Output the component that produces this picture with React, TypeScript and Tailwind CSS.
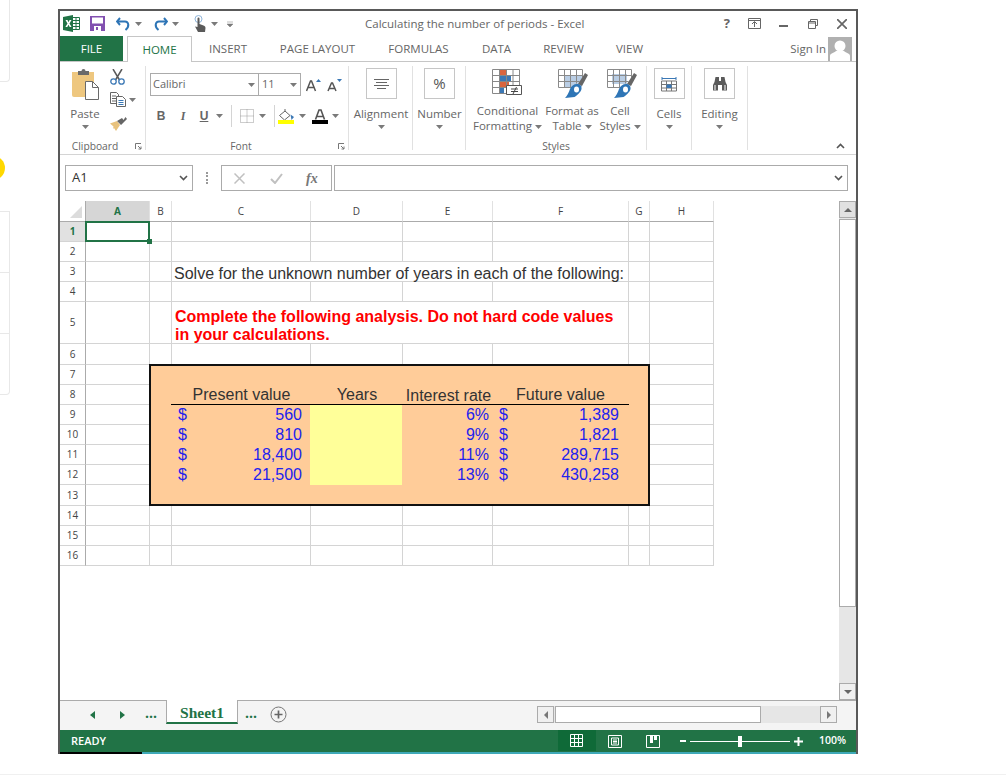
import type { ReactNode } from 'react'

const Caret = ({ className = '' }: { className?: string }) => (
    <svg width="7" height="4" viewBox="0 0 7 4" className={className}>
        <path d="M0 0h7L3.500 4z" fill="#7a7a7a" />
    </svg>
)

const ExcelLogo = () => (
    <svg width="17" height="17" viewBox="0 0 17 17">
        <path d="M0 2 10 0v17L0 15z" fill="#217346" />
        <path d="M2.500 5h2l1 2.300L6.600 5h1.900L6.500 8.500 8.600 12H6.700L5.500 9.700 4.300 12H2.400l2.100-3.500z" fill="#fff" />
        <path d="M10 2.500h6.500v12H10" fill="#fff" stroke="#217346" />
        <path d="M10 5.500h6.500M10 8.500h6.500M10 11.500h6.500M13 2.500v12" stroke="#217346" fill="none" />
    </svg>
)

const SaveIcon = () => (
    <svg width="15" height="15" viewBox="0 0 15 15">
        <path d="M0 0h15v15H0z" fill="#8250b0" />
        <path d="M2 1.500h11v6H2z" fill="#fff" />
        <path d="M4 10h7v5H4z" fill="#fff" />
        <path d="M6 11h2v3H6z" fill="#8250b0" />
    </svg>
)

const UndoIcon = ({ flip = false }: { flip?: boolean }) => (
    <svg width="15" height="14" viewBox="0 0 15 14" className={flip ? '-scale-x-100' : ''}>
        <path d="M4 1 1 4.500 4 8" stroke="#2e75b6" strokeWidth="2" fill="none" />
        <path d="M1.500 4.500H9c3.500 0 5 5 .5 8.500" stroke="#2e75b6" strokeWidth="2" fill="none" />
    </svg>
)

const TouchIcon = () => (
    <svg width="13" height="17" viewBox="0 0 13 17">
        <circle cx="4.500" cy="4" r="3.500" fill="none" stroke="#8fb4d9" />
        <path d="M3.500 3.500a1 1 0 0 1 2 0V9l4 1.500c1.500.5 2 1.500 2 2.500L11 17H4L1 11.500 3.500 12z" fill="#5a5a5a" />
    </svg>
)

const PasteIcon = () => (
    <svg width="29" height="31" viewBox="0 0 29 31">
        <path d="M1 3h22v25H3a2 2 0 0 1-2-2z" fill="#eec77f" />
        <path d="M7 2h3.500a2 2 0 0 1 4 0H18v4H7z" fill="#6a6a6a" />
        <path d="M14.500 12.500h7l6 6v12h-13z" fill="#fff" stroke="#6a6a6a" />
        <path d="M21.500 12.500v6h6" fill="none" stroke="#6a6a6a" />
    </svg>
)

const ScissorsIcon = () => (
    <svg width="15" height="16" viewBox="0 0 15 16">
        <path d="M3 0l6.500 11M12 0 5.500 11" stroke="#5a5a5a" strokeWidth="1.500" fill="none" />
        <circle cx="3.500" cy="12.500" r="2.700" fill="none" stroke="#3b78b5" strokeWidth="1.300" />
        <circle cx="11.500" cy="12.500" r="2.700" fill="none" stroke="#3b78b5" strokeWidth="1.300" />
    </svg>
)

const CopyIcon = () => (
    <svg width="16" height="15" viewBox="0 0 16 15">
        <path d="M.500.500h6l2 2v9h-8z" fill="#fff" stroke="#666" />
        <path d="M2 4h4M2 6.500h4M2 9h4" stroke="#666" />
        <path d="M6.500 4.500h6l3 3v7h-9z" fill="#fff" stroke="#666" />
        <path d="M8.500 8.500h5M8.500 10.500h5M8.500 12.500h5" stroke="#3b78b5" />
    </svg>
)

const BrushIcon = () => (
    <svg width="17" height="15" viewBox="0 0 17 15">
        <path d="M0 7.500 7 5l3 4-4 6-2-3-1 1 .5-2.500z" fill="#e8c27d" />
        <path d="M7 5l5-3 1.500 2 2-3 1.500 2-2.500 2.500L11 9z" fill="#666" />
    </svg>
)

const BordersIcon = () => (
    <svg width="14" height="14" viewBox="0 0 14 14">
        <path d="M.500.500h13v13H.500zM7 .500v13M.500 7h13" fill="none" stroke="#9a9a9a" strokeDasharray="1 1" />
    </svg>
)

const FillIcon = () => (
    <svg width="17" height="15" viewBox="0 0 17 15">
        <path d="M7 2 1.500 6.500 6.500 11 12 6.500z" fill="#fff" stroke="#666" />
        <path d="M7 0v3" stroke="#666" />
        <path d="M12.500 5.500 16 8l-2.500 3z" fill="#3b78b5" />
        <path d="M0 11h16v4H0z" fill="#ffff00" />
    </svg>
)

const FontColorIcon = () => (
    <svg width="16" height="15" viewBox="0 0 16 15">
        <path d="M3.500 10.500 7 1h2l3.500 9.500M5 7.500h6" fill="none" stroke="#555" strokeWidth="1.600" />
        <path d="M0 11h16v4H0z" fill="#000" />
    </svg>
)

const GrowFont = ({ shrink = false }: { shrink?: boolean }) => (
    <svg width="15" height="14" viewBox="0 0 15 14">
        <path d={shrink ? 'M1 13 4.500 5h1L9 13M2.500 10.500h5' : 'M.500 13 4.500 3h1l4 10M2 9.500h6'} fill="none" stroke="#555" strokeWidth="1.500" />
        <path d={shrink ? 'M10 1h5l-2.500 3z' : 'M10 4l2.500-3L15 4z'} fill="#3b78b5" />
    </svg>
)

const AlignIcon = () => (
    <svg width="15" height="10" viewBox="0 0 15 10">
        <path d="M0 .500h15M2 3.500h11M0 6.500h15M3 9.500h9" stroke="#666" />
    </svg>
)

const ConditionalIcon = () => (
    <svg width="31" height="31" viewBox="0 0 31 31">
        <path d="M8 1h6v5H8zM8 13h9v5H8z" fill="#d9653f" />
        <path d="M8 7h11v5H8zM8 19h4v5H8z" fill="#3b78b5" />
        <path d="M.500.500h27v18M.500.500v24h14M.500 6.500h27M.500 12.500h27M.500 18.500h14M7.500.500v24M14.500.500v18M21 .500v18" fill="none" stroke="#888" />
        <path d="M14.500 16.500h15v9h-15z" fill="#fff" stroke="#555" />
        <path d="M19 20h7M19 22.500h7M24.500 18l-3.500 7" stroke="#444" fill="none" />
    </svg>
)

const TableBrushIcon = ({ wide = false }: { wide?: boolean }) => (
    <svg width="31" height="31" viewBox="0 0 31 31">
        {wide ? (
            <path d="M5 5h15v10H5z" fill="#b9cde4" />
        ) : (
            <path d="M6 6h18v12H6z" fill="#b9cde4" />
        )}
        <path d="M.500.500h24v8M.500.500v18h15M.500 6.500h24M.500 12.500h21M6.500.500v18M12.500.500v18M18.500.500v14" fill="none" stroke="#8a8a8a" />
        <path d="M20 15 27 4l3 2-6 11z" fill="#666" />
        <path d="M19 15c3 0 5 2 4.500 5-.5 3-5 7-7 8L7 29c2-2 4-6 5-9 1-3 4-5 7-5z" fill="#2e75b6" />
        <ellipse cx="18.500" cy="20.500" rx="2.500" ry="3" fill="#fff" />
    </svg>
)

const CellsIcon = () => (
    <svg width="16" height="16" viewBox="0 0 16 16">
        <path d="M1 1v3M15 1v3M1 2.500h14" stroke="#3b78b5" fill="none" />
        <path d="M.500 5h15v10H.500zM.500 8.500h15M.500 12h15M5.500 5v10M10.500 5v10" fill="none" stroke="#777" />
        <path d="M5.500 8.500h5V12h-5z" fill="#3b78b5" />
    </svg>
)

const BinocularsIcon = () => (
    <svg width="16" height="14" viewBox="0 0 16 14">
        <path d="M3.500 0H7v4h2V0h3.500l1 5L15 8v5.500h-5V8H6v5.500H1V8l1.500-3z" fill="#5a5a5a" />
        <path d="M3 8v5M13 8v5" stroke="#fff" />
    </svg>
)

const Launcher = () => (
    <svg width="7" height="7" viewBox="0 0 7 7">
        <path d="M.500 6V.500H6M3 3l3 3M6 3.500V6H3.500" fill="none" stroke="#777" />
    </svg>
)

const Chevron = ({ up = false }: { up?: boolean }) => (
    <svg width="9" height="6" viewBox="0 0 9 6" className={up ? 'rotate-180' : ''}>
        <path d="M1 1l3.500 3.500L8 1" fill="none" stroke="#555" strokeWidth="1.600" />
    </svg>
)

function Group({ className, label, labelClass, launcher, children }: {
    className: string
    label: string
    labelClass?: string
    launcher?: boolean
    children: ReactNode
}) {
    return (
        <div className={`flex flex-col h-[84px] border-r border-[#e1e1e1] ${className}`}>
            <div className="flex-1">{children}</div>
            <div className="flex items-center h-4 -mb-1 text-[10.25px] leading-4 text-[#666]">
                <span className={`text-center ${labelClass ?? 'w-full'}`}>{label}</span>
                {launcher && <span className="ml-auto mr-[3px] flex"><Launcher /></span>}
            </div>
        </div>
    )
}

function BigButton({ label, children }: { label: string; children: ReactNode }) {
    return (
        <div className="flex flex-col items-center">
            <div className="w-[31px] h-[31px] border border-[#c6c6c6] flex items-center justify-center">{children}</div>
            <div className="mt-[7px] text-[11.5px] leading-4 text-[#666] whitespace-nowrap">{label}</div>
            <Caret className="mt-[3px]" />
        </div>
    )
}

const colHeads = [
    { name: 'A', cls: 'bg-[#d6d6d6] text-[#217346] font-bold' },
    { name: 'B', cls: '' },
    { name: 'C', cls: '' },
    { name: 'D', cls: '' },
    { name: 'E', cls: '' },
    { name: 'F', cls: '' },
    { name: 'G', cls: '' },
    { name: 'H', cls: '' },
]

const plainCell = 'border-r border-b border-[#d4d4d4]'
const rowHead = 'flex items-center justify-center text-[10px] text-[#444] border-r border-b border-r-[#ababab] border-b-[#d4d4d4]'

function SheetGrid() {
    const rows = Array.from({ length: 16 }, (_, i) => i + 1)
    return (
        <div className="grid w-fit grid-cols-[26px_64px_22px_139px_92px_90px_136px_21px_64px] grid-rows-[21px_20px_20px_20px_20px_42px_21px_20px_20px_20px_20px_20px_20px_21px_20px_20px_20px]">
            {/* header row */}
            <div className="flex items-end justify-end pr-[3px] pb-[3px] border-r border-b border-[#ababab]">
                <svg width="12" height="12" viewBox="0 0 12 12"><path d="M12 0v12H0z" fill="#dcdcdc" /></svg>
            </div>
            {colHeads.map(c => (
                <div key={c.name} className={`flex items-center justify-center text-[10px] text-[#444] border-b border-b-[#ababab] border-r border-r-[#e1e1e1] ${c.cls}`}>
                    {c.name}
                </div>
            ))}
            {rows.map(r => {
                const head = (
                    <div key={`h${r}`} className={`${rowHead} ${r === 1 ? 'bg-[#e1e1e1] text-[#217346] font-bold' : ''}`}>{r}</div>
                )
                if (r === 1) {
                    return [
                        head,
                        <div key="a1" className={`relative ${plainCell}`}>
                            <div className="absolute -left-px -top-px -right-px -bottom-px border-2 border-[#217346] z-10" />
                            <div className="absolute -right-[3px] -bottom-[3px] w-[5px] h-[5px] bg-[#217346] z-10" />
                        </div>,
                        ...colHeads.slice(1).map(c => <div key={`1${c.name}`} className={plainCell} />),
                    ]
                }
                if (r === 3) {
                    return [
                        head,
                        <div key="a3" className={plainCell} />,
                        <div key="b3" className={plainCell} />,
                        <div key="c3" className={`col-span-4 pl-[2px] pt-px text-[16px] leading-[21px] text-[#333] whitespace-nowrap font-['Liberation_Sans',Arial,sans-serif] ${plainCell}`}>
                            Solve for the unknown number of years in each of the following:
                        </div>,
                        <div key="g3" className={plainCell} />,
                        <div key="h3" className={plainCell} />,
                    ]
                }
                if (r === 5) {
                    return [
                        head,
                        <div key="a5" className={plainCell} />,
                        <div key="b5" className={plainCell} />,
                        <div key="c5" className={`col-span-4 pl-[3px] pr-2 pt-[6px] flex items-center text-[16px] leading-[18px] font-bold text-[#ff0000] font-['Liberation_Sans',Arial,sans-serif] ${plainCell}`}>
                            Complete the following analysis. Do not hard code values in your calculations.
                        </div>,
                        <div key="g5" className={plainCell} />,
                        <div key="h5" className={plainCell} />,
                    ]
                }
                if (r >= 7 && r <= 13) {
                    return [
                        head,
                        <div key={`a${r}`} className={plainCell} />,
                        <div key={`h${r}c`} className={`col-start-9 ${plainCell}`} />,
                    ]
                }
                return [head, ...colHeads.map(c => <div key={`${r}${c.name}`} className={plainCell} />)]
            })}
            <PeriodsBox />
        </div>
    )
}

const boxRows = [
    { pv: '560', rate: '6%', fv: '1,389' },
    { pv: '810', rate: '9%', fv: '1,821' },
    { pv: '18,400', rate: '11%', fv: '289,715' },
    { pv: '21,500', rate: '13%', fv: '430,258' },
]

function PeriodsBox() {
    return (
        <div className="col-start-3 col-span-6 row-start-8 row-span-7 -ml-px -mt-px border-2 border-[#111] bg-[#ffcc99] grid grid-cols-[20px_139px_92px_90px_137px_1fr] grid-rows-[19px_20px_20px_20px_20px_20px_1fr] text-[16px] leading-[20px] font-['Liberation_Sans',Arial,sans-serif]">
            <div className="col-span-6" />
            <div />
            <div className="col-span-4 grid grid-cols-[139px_92px_90px_137px] border-b border-black text-[#333]">
                <div className="text-center pl-[2px]">Present value</div>
                <div className="text-center pl-[2px]">Years</div>
                <div className="text-center whitespace-nowrap pt-px pl-[3px]">Interest rate</div>
                <div className="text-center">Future value</div>
            </div>
            <div />
            {boxRows.map(row => [
                <div key={`s${row.pv}`} />,
                <div key={`p${row.pv}`} className="flex justify-between pl-[7px] pr-[8px] text-[#2222ee]"><span>$</span><span>{row.pv}</span></div>,
                <div key={`y${row.pv}`} className="bg-[#ffff99]" />,
                <div key={`r${row.pv}`} className="text-right pr-[3px] text-[#2222ee]">{row.rate}</div>,
                <div key={`f${row.pv}`} className="flex justify-between pl-[7px] pr-[10px] text-[#2222ee]"><span>$</span><span>{row.fv}</span></div>,
                <div key={`e${row.pv}`} />,
            ])}
        </div>
    )
}

const tabs = [
    { name: 'INSERT', w: 'w-[72px]' },
    { name: 'PAGE LAYOUT', w: 'w-[107px]' },
    { name: 'FORMULAS', w: 'w-[95px]' },
    { name: 'DATA', w: 'w-[61px]' },
    { name: 'REVIEW', w: 'w-[73px]' },
    { name: 'VIEW', w: 'w-[59px]' },
]

export default function App() {
    return (
        <div className="w-[1006px] h-[781px] overflow-hidden bg-white flex flex-col font-['Open_Sans',sans-serif]">
            <div className="flex h-[774px] border-b border-[#f0f0f0] shrink-0 box-content">
                {/* page behind the window */}
                <div className="w-[58px] shrink-0 flex flex-col">
                    <div className="w-[10px] h-[82px] border-r border-b border-[#e8e8e8] rounded-br" />
                    <div className="w-6 h-6 rounded-full bg-[#ffd800] -ml-[19px] mt-[74px]" />
                    <div className="w-[10px] h-[184px] mt-[31px] border border-l-0 border-[#e8e8e8] rounded-br flex flex-col">
                        <div className="h-[61px] border-b border-[#e8e8e8]" />
                        <div className="h-[61px] border-b border-[#e8e8e8]" />
                    </div>
                </div>

                {/* excel window */}
                <div className="w-[800px] h-[745px] mt-[9px] border-2 border-b-0 border-[#595959] flex flex-col text-[#666]">
                    {/* title bar */}
                    <div className="h-[25px] flex items-center shrink-0">
                        <div className="w-[305px] flex items-center shrink-0">
                            <span className="ml-[3px] flex"><ExcelLogo /></span>
                            <span className="ml-[10px] flex"><SaveIcon /></span>
                            <span className="ml-[11px] flex"><UndoIcon /></span>
                            <Caret className="ml-[4px]" />
                            <span className="ml-[11px] flex"><UndoIcon flip /></span>
                            <Caret className="ml-[4px]" />
                            <span className="ml-[15px] flex"><TouchIcon /></span>
                            <Caret className="ml-[4px]" />
                            <svg width="6" height="6" viewBox="0 0 6 6" className="ml-[9px]"><path d="M0 1h6M0 3h6L3 6z" fill="#7a7a7a" stroke="#7a7a7a" strokeWidth=".5" /></svg>
                        </div>
                        <div className="text-[11.5px] whitespace-nowrap">Calculating the number of periods - Excel</div>
                        <div className="ml-auto flex items-center mr-[9px]">
                            <span className="font-bold text-[13px] text-[#666] mr-[18px] leading-none">?</span>
                            <svg width="13" height="11" viewBox="0 0 13 11" className="mr-[18px]"><path d="M.500.500h12v10H.500zM.500 2.500h12" fill="none" stroke="#666" /><path d="M6.500 9V4M4 6l2.500-2.500L9 6" fill="none" stroke="#666" /></svg>
                            <svg width="9" height="2" viewBox="0 0 9 2" className="mr-[20px] mt-1"><path d="M0 0h9v2H0z" fill="#666" /></svg>
                            <svg width="10" height="10" viewBox="0 0 10 10" className="mr-[19px]"><path d="M2.500 2.500V.500h7v6H7.500M.500 2.500h7v7h-7zM.500 4h7" fill="none" stroke="#666" /></svg>
                            <svg width="10" height="10" viewBox="0 0 10 10"><path d="M0 0l10 10M10 0 0 10" stroke="#666" strokeWidth="1.700" /></svg>
                        </div>
                    </div>

                    {/* tabs */}
                    <div className="h-[26px] flex shrink-0 border-b border-[#c6c6c6] text-[11.5px]">
                        <div className="w-[63px] h-[25px] bg-[#217346] text-white flex items-center justify-center">FILE</div>
                        <div className="ml-1 w-[65px] h-[26px] border border-b-0 border-[#c6c6c6] bg-white text-[#217346] flex items-center justify-center">HOME</div>
                        {tabs.map(t => (
                            <div key={t.name} className={`${t.w} h-[25px] flex items-center justify-center whitespace-nowrap`}>{t.name}</div>
                        ))}
                        <div className="ml-auto flex items-center">
                            <span className="text-[11.5px] mr-[2px]">Sign In</span>
                            <svg width="24" height="24" viewBox="0 0 24 24" className="mr-[4px]">
                                <path d="M0 0h24v24H0z" fill="#b0b0b0" />
                                <circle cx="12" cy="9" r="5.500" fill="#fff" />
                                <path d="M2 24v-5c0-3 4-3 6-5h8c2 2 6 2 6 5v5z" fill="#fff" />
                            </svg>
                        </div>
                    </div>

                    {/* ribbon */}
                    <div className="h-[93px] shrink-0 border-b border-[#d4d4d4] pt-1 flex items-start">
                        <Group className="w-[86px]" label="Clipboard" labelClass="w-[70px]" launcher>
                            <div className="flex">
                                <div className="w-[50px] flex flex-col items-center pt-[3px]">
                                    <PasteIcon />
                                    <div className="mt-[6px] text-[11.5px] leading-4">Paste</div>
                                    <Caret className="mt-[3px]" />
                                </div>
                                <div className="flex flex-col pt-[3px]">
                                    <ScissorsIcon />
                                    <div className="flex items-center mt-[7px]"><CopyIcon /><Caret className="ml-[3px]" /></div>
                                    <span className="mt-[9px] flex"><BrushIcon /></span>
                                </div>
                            </div>
                        </Group>
                        <Group className="w-[203px]" label="Font" labelClass="w-[190px]" launcher>
                            <div className="flex items-center ml-[4px] mt-[7px]">
                                <div className="w-[109px] h-[23px] border border-[#ababab] flex items-center justify-between pl-[2px] pr-[3px] text-[11px]">
                                    <span>Calibri</span><Caret />
                                </div>
                                <div className="w-[43px] h-[23px] -ml-px border border-[#ababab] flex items-center justify-between pl-[3px] pr-[3px] text-[11px]">
                                    <span>11</span><Caret />
                                </div>
                                <span className="ml-[5px] flex"><GrowFont /></span>
                                <span className="ml-[6px] flex"><GrowFont shrink /></span>
                            </div>
                            <div className="flex items-center ml-[8px] mt-[8px] h-[24px]">
                                <span className="w-[14px] text-center font-bold text-[12px] font-['Liberation_Sans',sans-serif]">B</span>
                                <span className="ml-[8px] w-[14px] text-center italic font-bold text-[12px] font-['Liberation_Serif',serif]">I</span>
                                <span className="ml-[7px] w-[14px] text-center underline font-bold text-[12px] font-['Liberation_Sans',sans-serif]">U</span>
                                <Caret className="ml-[5px]" />
                                <span className="ml-[8px] w-px h-[22px] bg-[#d4d4d4]" />
                                <span className="ml-[8px] flex"><BordersIcon /></span>
                                <Caret className="ml-[5px]" />
                                <span className="ml-[8px] w-px h-[22px] bg-[#d4d4d4]" />
                                <span className="ml-[3px] flex"><FillIcon /></span>
                                <Caret className="ml-[4px]" />
                                <span className="ml-[6px] flex"><FontColorIcon /></span>
                                <Caret className="ml-[4px]" />
                            </div>
                        </Group>
                        <Group className="w-[64px]" label="">
                            <div className="pt-[2px] pl-px"><BigButton label="Alignment"><AlignIcon /></BigButton></div>
                        </Group>
                        <Group className="w-[53px]" label="">
                            <div className="pt-[2px] pl-px"><BigButton label="Number"><span className="text-[15px] leading-none text-[#555]">%</span></BigButton></div>
                        </Group>
                        <Group className="w-[181px]" label="Styles">
                            <div className="flex text-[11.5px] leading-[15px] text-center pt-[3px]">
                                <div className="w-[85px] flex flex-col items-center ml-[-1px]">
                                    <ConditionalIcon />
                                    <div className="mt-[3px] whitespace-nowrap">Conditional<br />Formatting <Caret className="inline align-middle" /></div>
                                </div>
                                <div className="w-[44px] flex flex-col items-center">
                                    <span className="ml-[2px] flex"><TableBrushIcon /></span>
                                    <div className="mt-[3px] whitespace-nowrap">Format as<br />Table <Caret className="inline align-middle" /></div>
                                </div>
                                <div className="w-[52px] flex flex-col items-center">
                                    <span className="ml-[4px] flex"><TableBrushIcon wide /></span>
                                    <div className="mt-[3px] whitespace-nowrap">Cell<br />Styles <Caret className="inline align-middle" /></div>
                                </div>
                            </div>
                        </Group>
                        <Group className="w-[45px]" label="">
                            <div className="pt-[2px]"><BigButton label="Cells"><CellsIcon /></BigButton></div>
                        </Group>
                        <Group className="w-[56px]" label="">
                            <div className="pt-[2px]"><BigButton label="Editing"><BinocularsIcon /></BigButton></div>
                        </Group>
                        <div className="ml-auto self-end mb-[5px] mr-[11px] flex"><Chevron up /></div>
                    </div>

                    {/* formula bar */}
                    <div className="h-[46px] shrink-0 pt-[10px] flex items-start">
                        <div className="ml-[5px] w-[128px] h-[26px] border border-[#ababab] flex items-center justify-between pl-[6px] pr-[4px] text-[13px] text-[#333]">
                            <span>A1</span><Chevron />
                        </div>
                        <div className="ml-[13px] w-[2px] h-[12px] mt-[7px] border-l-2 border-dotted border-[#999]" />
                        <div className="ml-[13px] w-[111px] h-[26px] border border-[#ababab] flex items-center">
                            <svg width="11" height="11" viewBox="0 0 11 11" className="ml-[12px]"><path d="M.500.500l10 10M10.500.500l-10 10" stroke="#c0c0c0" strokeWidth="1.500" /></svg>
                            <svg width="13" height="11" viewBox="0 0 13 11" className="ml-[25px]"><path d="M1 6l4 4 7-9" fill="none" stroke="#c0c0c0" strokeWidth="2" /></svg>
                            <span className="ml-[23px] italic font-bold text-[14px] text-[#777] font-['Liberation_Serif',serif]">fx</span>
                        </div>
                        <div className="ml-[2px] w-[514px] h-[26px] border border-[#ababab] flex items-center justify-end pr-[4px]">
                            <Chevron />
                        </div>
                    </div>

                    {/* sheet + vertical scrollbar */}
                    <div className="h-[499px] shrink-0 flex">
                        <div className="flex-1 min-w-0"><SheetGrid /></div>
                        <div className="w-[17px] flex flex-col bg-[#e6e6e6]">
                            <div className="h-[17px] border border-[#ababab] bg-[#e1e1e1] flex items-center justify-center">
                                <svg width="8" height="4" viewBox="0 0 8 4"><path d="M0 4h8L4 0z" fill="#666" /></svg>
                            </div>
                            <div className="h-[388px] mt-px border border-[#ababab] bg-white" />
                            <div className="mt-auto h-[17px] border border-[#ababab] bg-[#f0f0f0] flex items-center justify-center">
                                <svg width="8" height="4" viewBox="0 0 8 4"><path d="M0 0h8L4 4z" fill="#666" /></svg>
                            </div>
                        </div>
                    </div>

                    {/* sheet tabs */}
                    <div className="h-[30px] shrink-0 border-t border-[#ababab] bg-[#f4f4f4] flex items-start">
                        <svg width="5" height="8" viewBox="0 0 5 8" className="ml-[30px] mt-[10px]"><path d="M5 0v8L0 4z" fill="#217346" /></svg>
                        <svg width="5" height="8" viewBox="0 0 5 8" className="ml-[25px] mt-[10px]"><path d="M0 0v8l5-4z" fill="#217346" /></svg>
                        <span className="ml-[20px] mt-[4px] text-[14px] leading-4 font-bold text-[#217346]">...</span>
                        <div className="ml-[9px] w-[72px] h-[24px] -mt-px pt-[3px] border-x border-[#ababab] border-b-2 border-b-[#217346] bg-white flex items-center justify-center text-[15.5px] leading-5 font-bold text-[#217346] font-['Liberation_Serif',serif]">Sheet1</div>
                        <span className="ml-[7px] mt-[4px] text-[14px] leading-4 font-bold text-[#217346]">...</span>
                        <svg width="17" height="17" viewBox="0 0 17 17" className="ml-[13px] mt-[5px]"><circle cx="8.500" cy="8.500" r="7.500" fill="none" stroke="#777" /><path d="M8.500 4.500v8M4.500 8.500h8" stroke="#666" strokeWidth="1.700" /></svg>
                        <div className="ml-auto mr-[19px] mt-[5px] flex items-stretch h-[17px] bg-[#e6e6e6]">
                            <div className="w-[17px] border border-[#ababab] bg-[#f0f0f0] flex items-center justify-center">
                                <svg width="4" height="8" viewBox="0 0 4 8"><path d="M4 0v8L0 4z" fill="#777" /></svg>
                            </div>
                            <div className="ml-px w-[206px] border border-[#ababab] bg-white" />
                            <div className="w-[59px]" />
                            <div className="w-[17px] border border-[#ababab] bg-[#f0f0f0] flex items-center justify-center">
                                <svg width="4" height="8" viewBox="0 0 4 8"><path d="M0 0v8l4-4z" fill="#777" /></svg>
                            </div>
                        </div>
                    </div>

                    {/* status bar */}
                    <div className="h-[24px] shrink-0 bg-[#217346] flex flex-col">
                        <div className="h-[22px] flex items-center text-white text-[11px]">
                            <span className="ml-[11px] font-semibold">READY</span>
                            <div className="ml-auto flex items-center h-full">
                                <div className="w-[38px] h-[21px] self-start bg-[#0f6a38] flex items-center justify-center">
                                    <svg width="13" height="13" viewBox="0 0 13 13"><path d="M.500.500h12v12H.500zM4.500.500v12M8.500.500v12M.500 4.500h12M.500 8.500h12" fill="none" stroke="#fff" /></svg>
                                </div>
                                <svg width="14" height="13" viewBox="0 0 14 13" className="ml-[12px]"><path d="M.500.500h13v12H.500zM3.500 3h7v7h-7zM5 5h4M5 6.500h4M5 8h4" fill="none" stroke="#fff" /></svg>
                                <svg width="14" height="13" viewBox="0 0 14 13" className="ml-[24px]"><path d="M.500.500h13v12H.500z" fill="none" stroke="#fff" /><path d="M4 1h3v7H4zM8 1h3v4H8z" fill="#fff" /></svg>
                                <span className="ml-[20px] w-[6px] h-[2px] bg-white" />
                                <div className="ml-[4px] w-[100px] h-px bg-white relative">
                                    <span className="absolute left-[48px] -top-[5px] w-[4px] h-[11px] bg-white" />
                                </div>
                                <svg width="9" height="9" viewBox="0 0 9 9" className="ml-[4px]"><path d="M3.500 0h2v9h-2zM0 3.500h9v2H0z" fill="#fff" /></svg>
                                <span className="ml-[16px] mr-[10px] text-[10.5px] font-semibold">100%</span>
                            </div>
                        </div>
                        <div className="h-[2px] flex">
                            <div className="w-[82px] bg-black" />
                            <div className="flex-1 bg-[#3fa9b8]" />
                        </div>
                    </div>
                </div>
            </div>
        </div>
    )
}
